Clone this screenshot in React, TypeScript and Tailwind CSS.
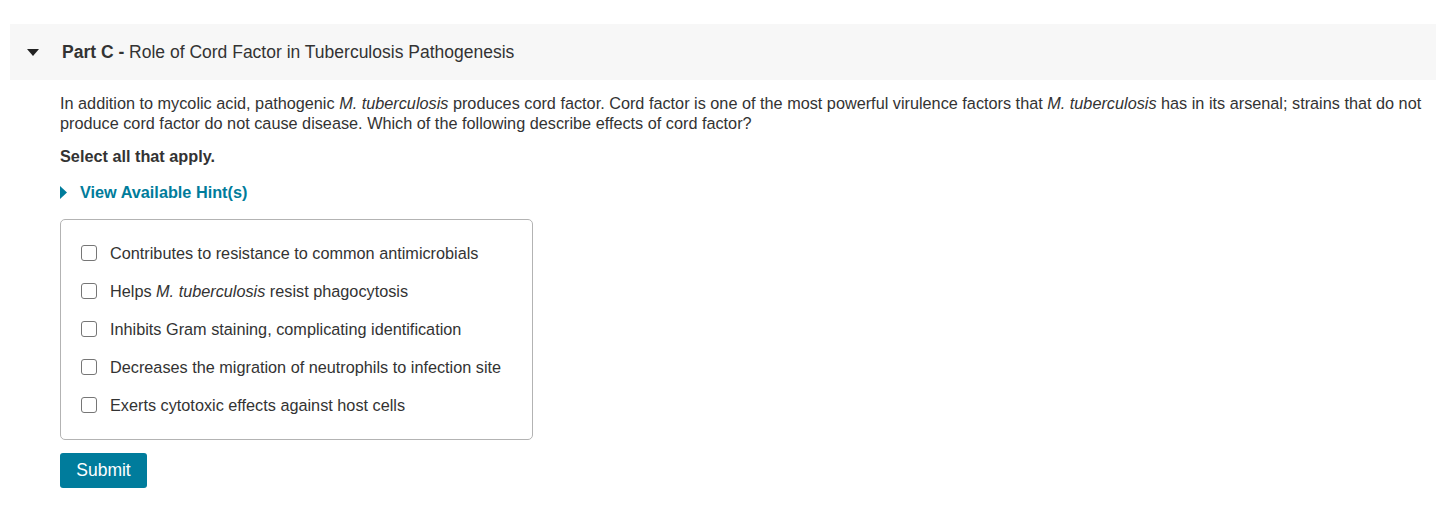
import React from "react";

const options: React.ReactNode[] = [
  "Contributes to resistance to common antimicrobials",
  <>Helps <i>M. tuberculosis</i> resist phagocytosis</>,
  "Inhibits Gram staining, complicating identification",
  "Decreases the migration of neutrophils to infection site",
  "Exerts cytotoxic effects against host cells",
];

export default function App() {
  return (
    <div className="w-[1436px] h-[512px] bg-white text-[#333333] font-['Liberation_Sans',Arial,sans-serif] pt-[24px]">
      <div className="ml-[10px] h-[56px] bg-[#f7f7f7] flex items-center">
        <svg width="12" height="7" viewBox="0 0 12 7" className="ml-[17px] mr-[23px]">
          <polygon points="0,0 12,0 6,7" fill="#222222" />
        </svg>
        <div className="text-[17.5px]">
          <b>Part C -</b> Role of Cord Factor in Tuberculosis Pathogenesis
        </div>
      </div>
      <div className="pl-[60px] pr-[10px]">
        <p className="mt-[13px] text-[16.25px] leading-[20px]">
          In addition to mycolic acid, pathogenic <i>M. tuberculosis</i> produces cord factor. Cord factor is one of the most powerful virulence factors that <i>M. tuberculosis</i> has in its arsenal; strains that do not produce cord factor do not cause disease. Which of the following describe effects of cord factor?
        </p>
        <p className="mt-[13px] text-[16.25px] leading-[20px] font-bold">Select all that apply.</p>
        <div className="mt-[16px] flex items-center text-[16.25px] leading-[20px] font-bold text-[#007c9b]">
          <svg width="7" height="13" viewBox="0 0 7 13" className="mr-[13px]">
            <polygon points="0,0 7,6.5 0,13" fill="#007c9b" />
          </svg>
          View Available Hint(s)
        </div>
        <div className="mt-[17px] w-[473px] h-[221px] border border-[#b3b3b3] rounded-[5px] pt-[14px] pl-[20px]">
          {options.map((o, i) => (
            <label key={i} className="flex items-center h-[38px] text-[16.25px]">
              <span className="w-[16px] h-[16px] border border-[#767676] rounded-[3px] bg-white mr-[13px] shrink-0" />
              <span>{o}</span>
            </label>
          ))}
        </div>
        <button className="mt-[13px] w-[87px] h-[35px] bg-[#007c9c] text-white text-[17.5px] rounded-[3px]">
          Submit
        </button>
      </div>
    </div>
  );
}
